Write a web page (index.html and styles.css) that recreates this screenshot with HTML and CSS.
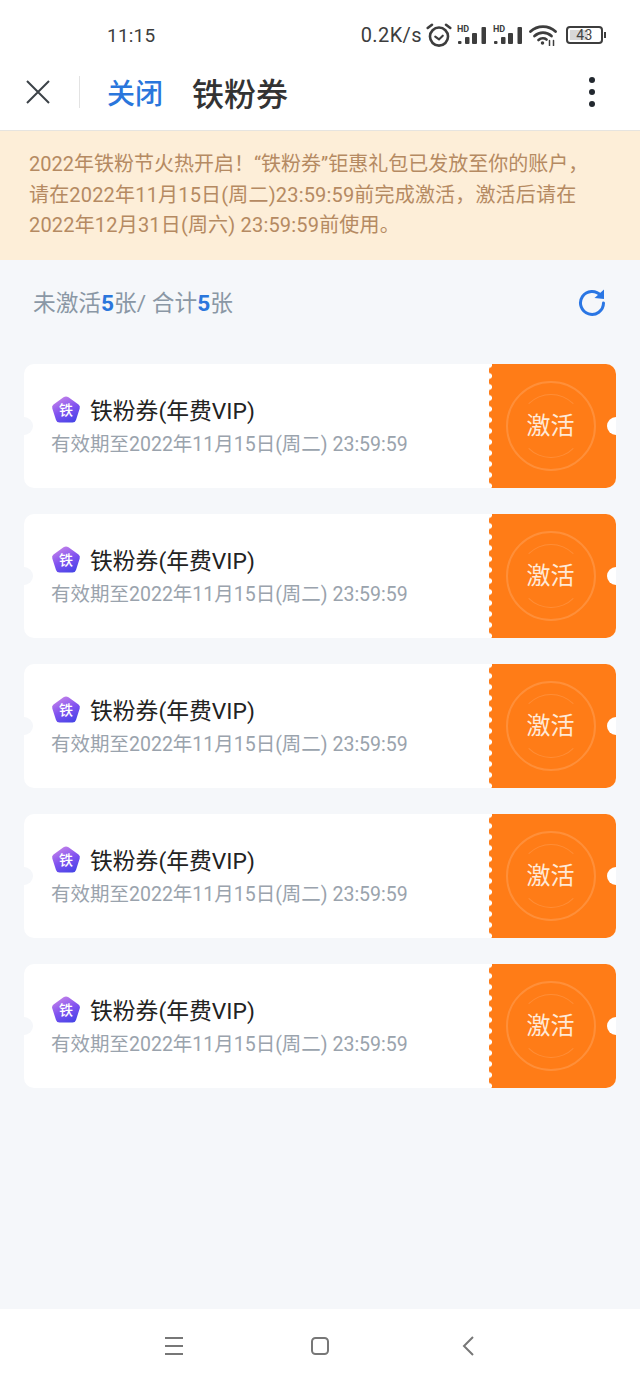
FILE: index.html
```html
<!DOCTYPE html>
<html lang="zh-CN">
<head>
    <meta charset="UTF-8">
    <meta name="viewport" content="width=device-width, initial-scale=1.0">
    <title>铁粉券</title>
    <link rel="stylesheet" href="styles.css">
</head>
<body>
    <div id="page">
        <div class="status">
            <span class="time">11:15</span>
            <div class="status-right">
                <span class="speed">0.2K/s</span>
                <svg class="st-alarm" width="28" height="28" viewBox="0 0 26 26" fill="none" stroke="#3d3d3d" stroke-width="2.4" stroke-linecap="round"><circle cx="13" cy="14.5" r="8.4"/><path d="M9.5 14.5l3.5 2.6 3.5-3.4" stroke-width="2"/><path d="M2.5 6.5l4-3M23.5 6.5l-4-3"/></svg>
                <svg class="st-signal" width="30" height="20" viewBox="0 0 30 20"><text x="0" y="7" class="hd">HD</text><g fill="#3d3d3d"><rect x="1" y="16" width="3.500" height="3" rx="1"/><rect x="8" y="12" width="4.500" height="7" rx="1"/><rect x="15" y="8" width="5" height="11" rx="1"/><rect x="24.500" y="2" width="4.500" height="17" rx="1"/></g></svg>
                <svg class="st-signal" width="30" height="20" viewBox="0 0 30 20"><text x="0" y="7" class="hd">HD</text><g fill="#3d3d3d"><rect x="1" y="16" width="3.500" height="3" rx="1"/><rect x="8" y="12" width="4.500" height="7" rx="1"/><rect x="15" y="8" width="5" height="11" rx="1"/><rect x="24.500" y="2" width="4.500" height="17" rx="1"/></g></svg>
                <svg class="st-wifi" width="28" height="22" viewBox="0 0 28 22" fill="none" stroke="#3d3d3d" stroke-width="2.800" stroke-linecap="round"><path d="M1.500 7.500C8.500 1 19.500 1 26.500 7.500"/><path d="M5.500 12C10.500 7.500 17.500 7.500 22.500 12"/><path d="M9.500 16C12 14 15.500 14 17.500 15.500"/><circle cx="13.500" cy="19" r="1" fill="#3d3d3d" stroke-width="1.500"/><path d="M20.500 16.500v5M24.500 16.500v5" stroke-width="1.500"/></svg>
                <div class="battery"><span class="bat-fill"></span><span class="bat-num">43</span></div>
                <span class="bat-tip"></span>
            </div>
        </div>

        <div class="header">
            <svg class="close-x" width="26" height="26" viewBox="0 0 26 26" stroke="#3c4248" stroke-width="2" fill="none"><path d="M2 2l22 22M24 2L2 24"/></svg>
            <span class="divider"></span>
            <span class="close-txt">关闭</span>
            <span class="title">铁粉券</span>
            <div class="more"><i></i><i></i><i></i></div>
        </div>

        <div class="notice">2022年铁粉节火热开启！“铁粉券”钜惠礼包已发放至你的账户，<br><span class="wide">请在2022年11月15日(周二)23:59:59前完成激活，激活后请在</span><br><span class="wide">2022年12月31日(周六) 23:59:59前使用。</span></div>

        <div class="count">
            <span class="count-txt">未激活<b>5</b>张/ 合计<b>5</b>张</span>
            <svg class="refresh" width="28" height="28" viewBox="0 0 28 28" fill="none"><path d="M22.800 7.500A11.500 11.500 0 1 0 25.500 15" stroke="#2a76e4" stroke-width="3" stroke-linecap="round"/><path d="M26 1.500L26 11L16.500 10Z" fill="#2a76e4"/></svg>
        </div>

        <div class="list">
            <div class="card">
                <div class="info">
                    <div class="name"><span class="pent">铁</span>铁粉券(年费VIP)</div>
                    <div class="date">有效期至2022年11月15日(周二) 23:59:59</div>
                </div>
                <div class="stub"><span class="ring"></span><span class="ring2"></span><span class="act">激活</span></div>
            </div>
            <div class="card">
                <div class="info">
                    <div class="name"><span class="pent">铁</span>铁粉券(年费VIP)</div>
                    <div class="date">有效期至2022年11月15日(周二) 23:59:59</div>
                </div>
                <div class="stub"><span class="ring"></span><span class="ring2"></span><span class="act">激活</span></div>
            </div>
            <div class="card">
                <div class="info">
                    <div class="name"><span class="pent">铁</span>铁粉券(年费VIP)</div>
                    <div class="date">有效期至2022年11月15日(周二) 23:59:59</div>
                </div>
                <div class="stub"><span class="ring"></span><span class="ring2"></span><span class="act">激活</span></div>
            </div>
            <div class="card">
                <div class="info">
                    <div class="name"><span class="pent">铁</span>铁粉券(年费VIP)</div>
                    <div class="date">有效期至2022年11月15日(周二) 23:59:59</div>
                </div>
                <div class="stub"><span class="ring"></span><span class="ring2"></span><span class="act">激活</span></div>
            </div>
            <div class="card">
                <div class="info">
                    <div class="name"><span class="pent">铁</span>铁粉券(年费VIP)</div>
                    <div class="date">有效期至2022年11月15日(周二) 23:59:59</div>
                </div>
                <div class="stub"><span class="ring"></span><span class="ring2"></span><span class="act">激活</span></div>
            </div>
        </div>

        <div class="nav">
            <svg width="20" height="20" viewBox="0 0 20 20" stroke="#777" stroke-width="2" fill="none"><path d="M1 2h18M1 10h18M1 18h18"/></svg>
            <svg width="20" height="20" viewBox="0 0 20 20" stroke="#777" stroke-width="2" fill="none"><rect x="2" y="2" width="16" height="16" rx="3.500"/></svg>
            <svg width="12" height="20" viewBox="0 0 12 20" stroke="#777" stroke-width="2" fill="none"><path d="M11 1L2 10l9 9"/></svg>
        </div>
    </div>
</body>
</html>
```

FILE: styles.css
```css
*{
    margin: 0;
    padding: 0;
    box-sizing: border-box;
}
body{
    background-color: #f5f7fa;
    font-family: Roboto, "Noto Sans CJK SC", sans-serif;
}
#page{
    width: 640px;
    height: 1386px;
    display: flex;
    flex-direction: column;
    overflow: hidden;
}

/* status bar */
.status{
    height: 60px;
    background-color: #fff;
    display: flex;
    justify-content: space-between;
    align-items: center;
    padding: 10px 34px 0 107px;
    color: #3d3d3d;
}
.time{
    font-size: 19px;
    letter-spacing: 0.2px;
}
.status-right{
    display: flex;
    align-items: center;
}
.speed{
    font-size: 20px;
    letter-spacing: 0.4px;
    margin-right: 3px;
}
.st-alarm{
    margin-right: 4px;
}
.st-signal{
    margin-right: 6px;
}
.st-wifi{
    margin-right: 9px;
}
.hd{
    font-family: Roboto, sans-serif;
    font-size: 9px;
    font-weight: 700;
    fill: #3d3d3d;
}
.battery{
    position: relative;
    width: 37px;
    height: 18px;
    border: 2px solid #3d3d3d;
    border-radius: 4px;
    display: flex;
    align-items: center;
    justify-content: center;
}
.bat-fill{
    position: absolute;
    left: 2px;
    top: 2px;
    bottom: 2px;
    width: 18px;
    background-color: #d8d8d8;
}
.bat-num{
    position: relative;
    font-size: 14px;
    letter-spacing: 0.5px;
    line-height: 14px;
    color: #444;
}
.bat-tip{
    width: 2px;
    height: 6px;
    margin-left: 1px;
    background-color: #3d3d3d;
}

/* header */
.header{
    height: 71px;
    background-color: #fff;
    border-bottom: 1px solid #e6e4e0;
    display: flex;
    align-items: center;
    padding-bottom: 7px;
}
.close-x{
    margin-left: 25px;
}
.divider{
    width: 1px;
    height: 32px;
    background-color: #e3e3e3;
    margin-left: 28px;
}
.close-txt{
    margin-left: 27px;
    font-size: 28px;
    font-weight: 500;
    color: #2a76dc;
}
.title{
    margin-left: 29px;
    font-size: 32px;
    font-weight: 500;
    color: #333;
}
.more{
    margin-left: auto;
    margin-right: 45px;
    display: flex;
    flex-direction: column;
    gap: 6px;
}
.more i{
    display: block;
    width: 6px;
    height: 6px;
    border-radius: 50%;
    background-color: #22282f;
}

/* notice */
.notice{
    background-color: #fdeed8;
    color: #b58a62;
    font-size: 20px;
    line-height: 30.500px;
    padding: 18px 0 0 29px;
    height: 129px;
    white-space: nowrap;
}
.wide{
    letter-spacing: 0.18px;
}

/* counter row */
.count{
    height: 86px;
    display: flex;
    justify-content: space-between;
    align-items: center;
    padding: 0 34px 0 33px;
    font-size: 22.700px;
    color: #8a97a5;
}
.count-txt{
    padding-bottom: 4px;
}
.refresh{
    margin-bottom: 2px;
}
.count b{
    color: #2a76dc;
}

/* tickets */
.list{
    margin-top: 18px;
    display: flex;
    flex-direction: column;
    gap: 26px;
    padding: 0 24px;
}
.card{
    height: 124px;
    background-color: #fff;
    border-radius: 10px;
    display: flex;
    position: relative;
}
.card::before{
    content: "";
    position: absolute;
    left: -9px;
    top: 53px;
    width: 18px;
    height: 18px;
    border-radius: 50%;
    background-color: #f5f7fa;
}
.info{
    flex: 1;
    padding: 31px 0 0 28px;
}
.name{
    display: flex;
    align-items: center;
    font-size: 22.800px;
    line-height: 34px;
    color: #222;
}
.pent{
    width: 28px;
    height: 28px;
    margin: 0 10px 4px 0;
    clip-path: path("M11.5 1.2 Q14 -0.2 16.5 1.2 L26.5 8.5 Q28.5 10 27.7 12.5 L24 24 Q23.2 26.5 20.5 26.5 L7.5 26.5 Q4.8 26.5 4 24 L0.3 12.5 Q-0.5 10 1.5 8.5 Z");
    background: linear-gradient(155deg, #d68fe8 0%, #8052f0 50%, #3540e4 100%);
    display: flex;
    align-items: center;
    justify-content: center;
    color: #fff;
    font-size: 14px;
    font-weight: 500;
}
.date{
    margin-top: 1px;
    margin-left: -1px;
    font-size: 19.500px;
    line-height: 30px;
    color: #9aa3ad;
    white-space: nowrap;
}
.stub{
    width: 127px;
    background-color: #ff7c17;
    border-radius: 0 10px 10px 0;
    position: relative;
    overflow: hidden;
    display: flex;
    align-items: center;
    justify-content: center;
}
.stub::before{
    content: "";
    position: absolute;
    left: 0;
    top: 0;
    bottom: 0;
    width: 5px;
    background-image: radial-gradient(circle at 0 50%, #fff 2.800px, transparent 3.300px);
    background-size: 5px 11px;
    background-position: 0 6.500px;
}
.stub::after{
    content: "";
    position: absolute;
    right: -9px;
    top: 53px;
    width: 18px;
    height: 18px;
    border-radius: 50%;
    background-color: #fff;
}
.ring, .ring2{
    position: absolute;
    left: 17px;
    top: 17px;
    width: 90px;
    height: 90px;
    border-radius: 50%;
    border: 2px solid rgba(255,255,255,0.15);
}
.ring2{
    left: 30px;
    top: 30px;
    width: 64px;
    height: 64px;
    border-width: 1px;
    border-color: rgba(255,255,255,0.14) transparent;
}
.act{
    position: relative;
    padding: 0 4px 6px 0;
    font-size: 24px;
    color: #ffe9d6;
}

/* bottom nav */
.nav{
    margin-top: auto;
    height: 77px;
    background-color: #fff;
    display: flex;
    align-items: center;
    padding: 0 0 4px 164px;
    gap: 126px;
}
.nav svg:last-child{
    margin-left: 6px;
}
```
